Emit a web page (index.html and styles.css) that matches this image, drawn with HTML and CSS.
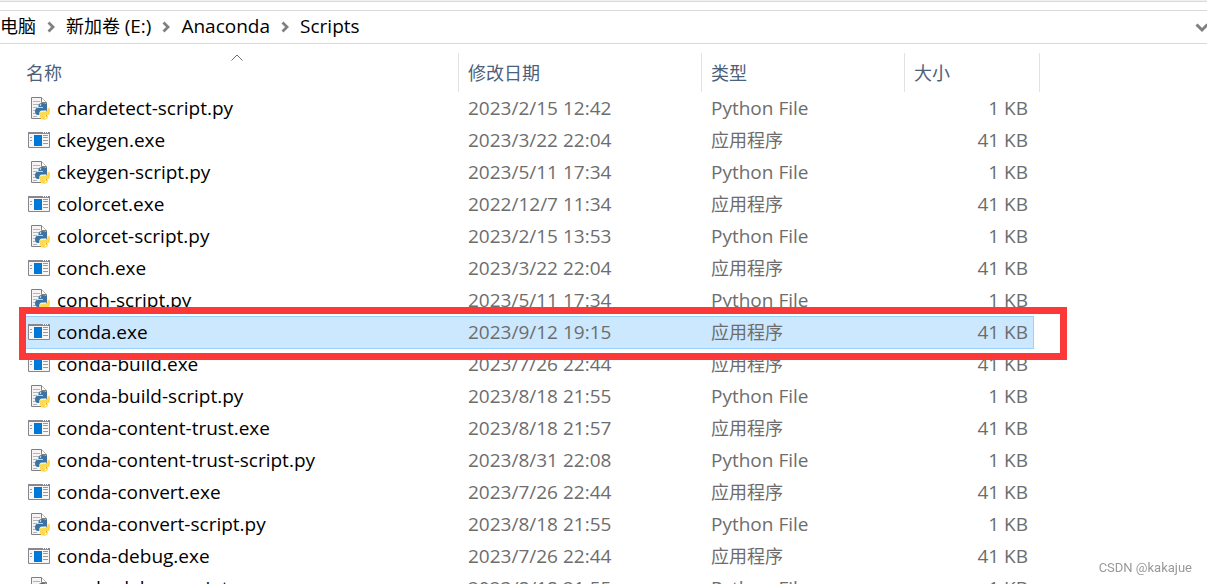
FILE: index.html
```html
<!DOCTYPE html>
<html lang="zh-CN">
<head>
    <meta charset="UTF-8">
    <meta name="viewport" content="width=device-width, initial-scale=1.0">
    <title>Scripts</title>
    <link rel="stylesheet" href="styles.css">
</head>
<body>
    <svg class="symbols" aria-hidden="true">
        <symbol id="icon-py" viewBox="0 0 22 24">
            <path d="M3.500 1.500h10l5 5v16h-15z" fill="#f4f4f4" stroke="#808080"/>
            <path d="M13.500 1.500v5h5" fill="#fff" stroke="#808080"/>
            <path d="M5 5.500h7M5 8.500h7M5 11.500h4M5 14.500h3M5 17.500h3M5 20.500h4" stroke="#b4b4b4"/>
            <path d="M14.500 7c-3 0-4 1-4 2.700V11h4.500v.8H10c-2.300 0-3 2-3 3.700S8 19 10 19h1.300v-2c0-1.500 1.200-2.500 2.700-2.500h3c1.300 0 2-1 2-2V9.500C19 7.700 17.500 7 14.500 7z" fill="#3773a5"/>
            <path d="M19.500 11.500v1.700c0 1.500-1 2.500-2.500 2.500h-3c-1.300 0-2 .8-2 2v3c0 2 1.500 3 4 3s4-1 4-3V20h-3.500v-.7H20c1.500 0 2.200-1.500 2.200-3.800s-.8-4-2.700-4z" fill="#ffd94f"/>
            <circle cx="12.500" cy="9" r=".8" fill="#fff"/>
            <circle cx="17.800" cy="21.700" r=".8" fill="#fff"/>
        </symbol>
        <symbol id="icon-exe" viewBox="0 0 22 24">
            <path d="M.5 4.500h21v15H.5z" fill="#f7f7f7" stroke="#85888c"/>
            <path d="M0 4h22v2H0z" fill="#85888c"/>
            <path d="M15 4.500h1M17 4.500h1M19 4.500h1" stroke="#fff"/>
            <path d="M2 9.500h2M2 12.500h2M15 7.500h5M15 9.500h5M15 12.500h5M15 15.500h5" stroke="#9a9a9a"/>
            <path d="M6 7h8v11H6z" fill="#0078d7"/>
        </symbol>
        <symbol id="icon-next" viewBox="0 0 8 12">
            <path d="M1.500 1.500L6 6l-4.500 4.500" fill="none" stroke="#808080" stroke-width="2.800"/>
        </symbol>
    </svg>

    <nav class="address-bar" aria-label="路径">
        <a href="#">电脑</a>
        <svg class="next"><use href="#icon-next"/></svg>
        <a href="#">新加卷 <span class="latin">(E:)</span></a>
        <svg class="next"><use href="#icon-next"/></svg>
        <a href="#" class="latin">Anaconda</a>
        <svg class="next"><use href="#icon-next"/></svg>
        <a href="#" class="latin">Scripts</a>
        <button type="button" class="history" aria-label="历史记录">
            <svg width="14" height="10" viewBox="0 0 14 10"><path d="M1.500 1.500L7 7l5.500-5.500" fill="none" stroke="#808080" stroke-width="3"/></svg>
        </button>
    </nav>

    <main class="file-list">
        <table>
            <colgroup>
                <col class="col-name">
                <col class="col-date">
                <col class="col-type">
                <col class="col-size">
                <col class="col-end">
            </colgroup>
            <thead>
                <tr>
                    <th aria-sort="ascending">名称<svg class="sort" width="12" height="7" viewBox="0 0 12 7"><path d="M.5 6.500L6 1l5.500 5.500" fill="none" stroke="#6d6d6d"/></svg></th>
                    <th>修改日期</th>
                    <th>类型</th>
                    <th colspan="2">大小</th>
                </tr>
            </thead>
            <tbody id="files"></tbody>
        </table>
    </main>

    <div class="watermark">CSDN @kakajue</div>

    <script src="files.js"></script>
</body>
</html>
```
FILE: styles.css
```css
* {
    box-sizing: border-box;
}

body {
    margin: 0;
    height: 100vh;
    overflow: hidden;
    background-color: #fff;
    border-top: 1px solid #f0f0f0;
    color: #000;
    font-family: "Open Sans", "Noto Sans CJK SC", sans-serif;
    font-size: 18px;
    line-height: 32px;
}

body::before {
    content: "";
    display: block;
    height: 8px;
    border-top: 1px solid #d9d9d9;
}

.symbols {
    position: absolute;
    width: 0;
    height: 0;
}

.latin {
    font-size: 19px;
}

.address-bar {
    display: flex;
    align-items: center;
    height: 34px;
    gap: 11px;
    overflow: hidden;
    border-top: 1px solid #d9d9d9;
    border-bottom: 1px solid #d9d9d9;
    white-space: nowrap;
}

.address-bar a {
    padding-bottom: 2px;
    color: #000;
    line-height: 30px;
    text-decoration: none;
}

.next {
    flex: none;
    width: 8px;
    height: 12px;
}

.history {
    display: flex;
    flex: none;
    margin-left: auto;
    margin-right: -2px;
    padding: 2px 0 0;
    border: none;
    background: none;
}

.file-list {
    padding: 9px 0 0 26px;
}

table {
    width: 1014px;
    table-layout: fixed;
    border-collapse: separate;
    border-spacing: 0;
    white-space: nowrap;
}

.col-name {
    width: 433px;
}

.col-date {
    width: 243px;
}

.col-type {
    width: 203px;
}

.col-size {
    width: 129px;
}

.col-end {
    width: 6px;
}

th {
    position: relative;
    height: 39px;
    padding: 0 9px;
    border-right: 1px solid #e2e2e2;
    color: #4c607a;
    font-weight: normal;
    text-align: left;
}

th:first-child {
    padding-left: 0;
}

.sort {
    position: absolute;
    top: 1px;
    left: 50%;
    margin-left: -11px;
}

td {
    height: 32px;
    padding: 0 9px;
    color: #6d6d6d;
}

td.name {
    position: relative;
    padding: 0 0 0 2px;
    color: #000;
}

.file {
    display: flex;
    align-items: center;
    gap: 7px;
    height: 32px;
}

.file svg {
    flex: none;
    width: 22px;
    height: 24px;
}

td.size {
    padding-right: 6px;
    text-align: right;
}

.selected td:not(.end) {
    background-color: #cce8ff;
    box-shadow: inset 0 1px #99d1ff, 0 1px #99d1ff;
}

.selected td.size {
    border-right: 1px solid #99d1ff;
    padding-right: 5px;
}

/* red frame round the chosen file */
.mark {
    position: absolute;
    z-index: 1;
    top: -9px;
    left: -7px;
    width: 1048px;
    height: 53px;
    border: 7px solid #fc3838;
    pointer-events: none;
}

.watermark {
    position: fixed;
    right: 15px;
    bottom: 7px;
    color: #999;
    font-family: Roboto, "Liberation Sans", sans-serif;
    font-size: 13px;
    line-height: 18px;
}
```
FILE: files.js
```js
var files = [
    ['chardetect-script.py', '2023/2/15 12:42'],
    ['ckeygen.exe', '2023/3/22 22:04'],
    ['ckeygen-script.py', '2023/5/11 17:34'],
    ['colorcet.exe', '2022/12/7 11:34'],
    ['colorcet-script.py', '2023/2/15 13:53'],
    ['conch.exe', '2023/3/22 22:04'],
    ['conch-script.py', '2023/5/11 17:34'],
    ['conda.exe', '2023/9/12 19:15'],
    ['conda-build.exe', '2023/7/26 22:44'],
    ['conda-build-script.py', '2023/8/18 21:55'],
    ['conda-content-trust.exe', '2023/8/18 21:57'],
    ['conda-content-trust-script.py', '2023/8/31 22:08'],
    ['conda-convert.exe', '2023/7/26 22:44'],
    ['conda-convert-script.py', '2023/8/18 21:55'],
    ['conda-debug.exe', '2023/7/26 22:44'],
    ['conda-debug-script.py', '2023/8/18 21:55']
];

var selected = 'conda.exe';

document.getElementById('files').innerHTML = files.map(function (file) {
    var isExe = file[0].endsWith('.exe');
    var isSelected = file[0] === selected;
    var icon = isExe ? 'icon-exe' : 'icon-py';
    var type = isExe ? '<td>应用程序</td>' : '<td class="latin">Python File</td>';

    return '<tr' + (isSelected ? ' class="selected"' : '') + '>' +
        '<td class="name latin"><div class="file"><svg><use href="#' + icon + '"/></svg>' + file[0] + '</div>' +
        (isSelected ? '<div class="mark"></div>' : '') + '</td>' +
        '<td class="latin">' + file[1] + '</td>' +
        type +
        '<td class="size latin">' + (isExe ? '41 KB' : '1 KB') + '</td>' +
        '<td class="end"></td></tr>';
}).join('');
```
